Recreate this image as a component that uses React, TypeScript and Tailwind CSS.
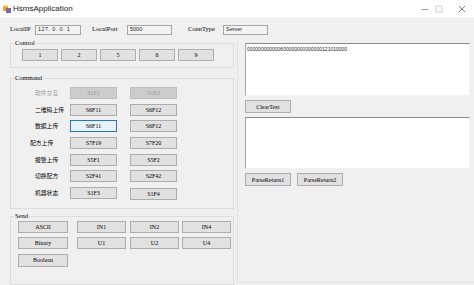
import React from "react";

const serif = "font-['Liberation_Serif','Noto_Sans_CJK_SC',serif]";
const cjk = "font-['Noto_Sans_CJK_SC',sans-serif]";

function Btn({
  children,
  className = "",
  disabled = false,
  focused = false,
}: {
  children: React.ReactNode;
  className?: string;
  disabled?: boolean;
  focused?: boolean;
}) {
  const base = disabled
    ? "bg-[#cccccc] border-[#bfbfbf] text-[#9a9a9a]"
    : focused
    ? "bg-[#e5f1fb] border-[#2f74c0] text-black"
    : "bg-[#e1e1e1] border-[#adadad] text-black";
  return (
    <div
      className={`flex items-center justify-center border text-[6px] leading-none ${serif} ${base} ${className}`}
    >
      {children}
    </div>
  );
}

function Field({ value, className = "" }: { value: string; className?: string }) {
  return (
    <div
      className={`h-[10px] border border-[#a6a6a6] bg-[#f4f4f4] flex items-center pl-[2px] text-[5.5px] leading-none font-['Liberation_Sans',sans-serif] text-[#222] ${className}`}
    >
      {value}
    </div>
  );
}

function GroupLabel({ children }: { children: React.ReactNode }) {
  return (
    <div
      className={`-mt-[5px] ml-[3px] w-fit px-[1px] bg-[#f0f0f0] text-[6.5px] leading-[8px] ${serif} text-black`}
    >
      {children}
    </div>
  );
}

const commandRows: { label: string; a: string; b: string; disabled?: boolean; focused?: boolean; shift?: boolean; bOffset?: boolean }[] = [
  { label: "软件交互", a: "S1F1", b: "S1F2", disabled: true },
  { label: "二维码上传", a: "S6F11", b: "S6F12" },
  { label: "数据上传", a: "S6F11", b: "S6F12", focused: true },
  { label: "配方上传", a: "S7F19", b: "S7F20", shift: true },
  { label: "报警上传", a: "S5F1", b: "S5F2" },
  { label: "切换配方", a: "S2F41", b: "S2F42" },
  { label: "机器状态", a: "S1F3", b: "S1F4", bOffset: true },
];

export default function App() {
  return (
    <div className="w-[474px] h-[285px] bg-[#f0f0f0] overflow-hidden flex flex-col">
      {/* Title bar */}
      <div className="h-[17px] bg-white flex items-center shrink-0">
        <svg className="ml-[3px]" width="8" height="8" viewBox="0 0 8 8">
          <rect x="0" y="1" width="5" height="5" fill="#e8a63a" />
          <rect x="3" y="3" width="5" height="5" fill="#6b6fc4" />
          <rect x="3" y="3" width="2" height="3" fill="#c9506a" />
          <rect x="1" y="0" width="3" height="2" fill="#f3d35a" />
        </svg>
        <span className="ml-[2px] text-[8px] leading-none font-['Liberation_Sans',sans-serif] text-[#1a1a1a]">
          HsmsApplication
        </span>
        <div className="ml-auto flex items-center">
          <svg width="8" height="8" viewBox="0 0 8 8" className="mr-[6px]">
            <line x1="0.5" y1="4.5" x2="7.5" y2="4.5" stroke="#8a8a8a" strokeWidth="0.8" />
          </svg>
          <svg width="8" height="8" viewBox="0 0 8 8" className="mr-[15px]">
            <rect x="1" y="1" width="6" height="6" fill="none" stroke="#c4c4c4" strokeWidth="0.8" />
          </svg>
          <svg width="8" height="8" viewBox="0 0 8 8" className="mr-[8px]">
            <path d="M1 1 L7 7 M7 1 L1 7" stroke="#6a6a6a" strokeWidth="0.8" />
          </svg>
        </div>
      </div>

      {/* Top row */}
      <div className={`flex items-center h-[11px] mt-[7px] pl-[10px] text-[6.5px] leading-none ${serif} text-black shrink-0`}>
        <span className="w-[25px]">LocalIP</span>
        <Field value="127. 0. 0. 1" className="w-[46px] tracking-[0.4px]" />
        <span className="ml-[11px] w-[35px]">LocalPort</span>
        <Field value="5000" className="w-[45px]" />
        <span className="ml-[16px] w-[35px]">ConnType</span>
        <Field value="Server" className="w-[45px]" />
      </div>

      {/* Main */}
      <div className="flex flex-1 min-h-0">
        {/* Left column */}
        <div className="w-[237px] shrink-0 flex flex-col">
          {/* Control */}
          <div className="mt-[8px] ml-[10px] w-[224px] border border-[#dcdcdc] pb-[6px]">
            <GroupLabel>Control</GroupLabel>
            <div className="mt-[2px] pl-[11px] flex gap-[3px]">
              {["1", "2", "5", "6", "9"].map((t) => (
                <Btn key={t} className="w-[36px] h-[12px]">
                  {t}
                </Btn>
              ))}
            </div>
          </div>

          {/* Command */}
          <div className="mt-[10px] ml-[10px] w-[224px] border border-[#dcdcdc] pb-[9px]">
            <GroupLabel>Command</GroupLabel>
            <div className="mt-[5px] flex flex-col gap-[4.67px]">
              {commandRows.map((r) => (
                <div key={r.label} className="flex items-start h-[12px]">
                  <span
                    className={`w-[35px] h-[12px] flex items-center text-[5.8px] leading-none ${cjk} ${
                      r.disabled ? "text-[#a0a0a0]" : "text-black"
                    } ${r.shift ? "ml-[19px]" : "ml-[24px]"} ${r.shift ? "mr-[5px]" : ""}`}
                  >
                    {r.label}
                  </span>
                  <Btn disabled={r.disabled} focused={r.focused} className="w-[47px] h-[12px]">
                    {r.a}
                  </Btn>
                  <Btn
                    disabled={r.disabled}
                    className={`ml-[13px] w-[47px] h-[12px] ${r.bOffset ? "mt-[1px]" : ""}`}
                  >
                    {r.b}
                  </Btn>
                </div>
              ))}
            </div>
          </div>

          {/* Send */}
          <div className="mt-[7px] ml-[10px] w-[224px] border border-[#dcdcdc] pb-[10px] flex-1">
            <GroupLabel>Send</GroupLabel>
            <div className="mt-[1px] pl-[7px] flex flex-col gap-[4.5px]">
              <div className="flex">
                <Btn className="w-[50px] h-[12px]">ASCII</Btn>
                <Btn className="ml-[9px] w-[49px] h-[12px]">IN1</Btn>
                <Btn className="ml-[4px] w-[49px] h-[12px]">IN2</Btn>
                <Btn className="ml-[3px] w-[49px] h-[12px]">IN4</Btn>
              </div>
              <div className="flex">
                <Btn className="w-[50px] h-[12px]">Binary</Btn>
                <Btn className="ml-[9px] w-[49px] h-[12px]">U1</Btn>
                <Btn className="ml-[4px] w-[49px] h-[12px]">U2</Btn>
                <Btn className="ml-[3px] w-[49px] h-[12px]">U4</Btn>
              </div>
              <div className="flex">
                <Btn className="w-[50px] h-[13px]">Boolean</Btn>
              </div>
            </div>
          </div>
        </div>

        {/* Right panel */}
        <div className="flex-1 mt-[5px] mb-[2px] border-l border-b border-[#e2e2e2] pl-[7px] pt-[3px] flex flex-col items-start">
          <div className="w-[225px] h-[53px] bg-white border-t border-l border-t-[#8c8c8c] border-l-[#a8a8a8] border-r border-b border-r-[#f3f3f3] border-b-[#f3f3f3] pt-[3px] pl-[1px] text-[5px] leading-none font-['Liberation_Sans',sans-serif] text-[#222]">
            000000000000600000000000000121010000
          </div>
          <Btn className="mt-[4px] w-[46px] h-[13px]">ClearText</Btn>
          <div className="mt-[4px] w-[225px] h-[52px] bg-white border-t border-l border-t-[#8c8c8c] border-l-[#a8a8a8] border-r border-b border-r-[#f3f3f3] border-b-[#f3f3f3]" />
          <div className="mt-[4px] flex">
            <Btn className="w-[46px] h-[13px]">ParseReturn1</Btn>
            <Btn className="ml-[6px] w-[46px] h-[13px]">ParseReturn2</Btn>
          </div>
        </div>
      </div>
    </div>
  );
}
